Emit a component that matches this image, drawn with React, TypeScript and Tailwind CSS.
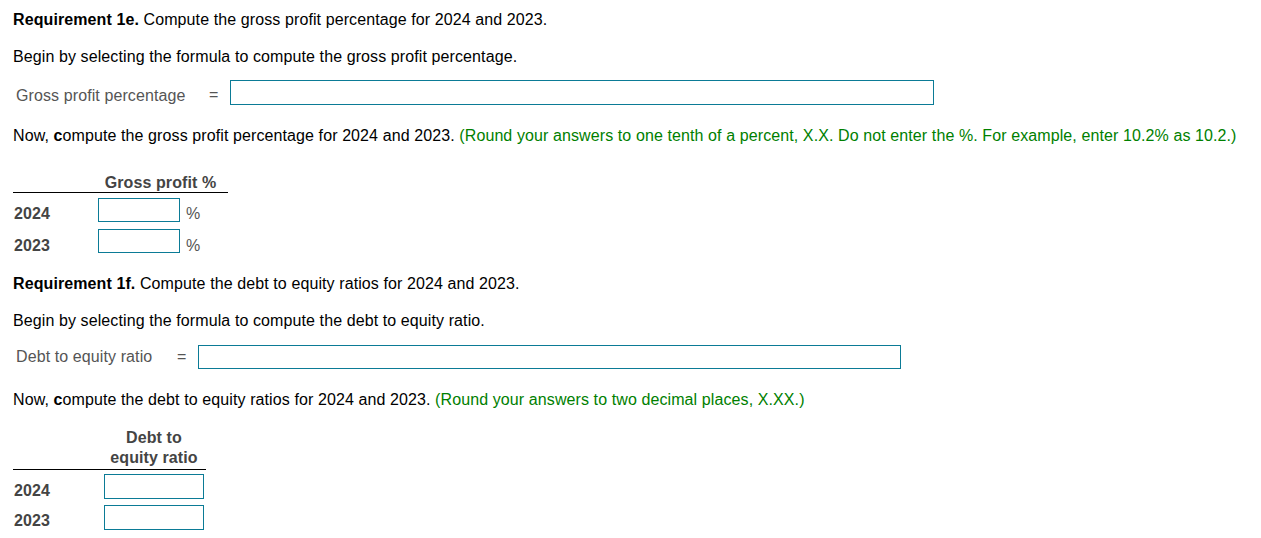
import React from "react";

const inputCls = "border border-[#0b7b96] bg-white box-border";

export default function App() {
  return (
    <div className="w-[1261px] h-[538px] bg-white text-black text-[16px] leading-[18px] tracking-[0.1px] overflow-hidden" style={{ fontFamily: '"Liberation Sans", Arial, sans-serif' }}>
      <div className="pl-[13px] pt-[11px]">
        <p className="h-[18px] whitespace-nowrap"><b>Requirement 1e.</b> Compute the gross profit percentage for 2024 and 2023.</p>
        <p className="mt-[19px] h-[18px] whitespace-nowrap">Begin by selecting the formula to compute the gross profit percentage.</p>
        <div className="mt-[14px] flex items-start h-[25px]">
          <span className="ml-[3px] mt-[7px] w-[193px] text-[#555] whitespace-nowrap">Gross profit percentage</span>
          <span className="mt-[6px] w-[21px] text-[#555]">=</span>
          <div className={`${inputCls} w-[704px] h-[25px]`} />
        </div>
        <p className="mt-[22px] h-[18px] whitespace-nowrap">
          Now, <b>c</b>ompute the gross profit percentage for 2024 and 2023.{" "}
          <span className="text-[#008000]">(Round your answers to one tenth of a percent, X.X. Do not enter the %. For example, enter 10.2% as 10.2.)</span>
        </p>

        <div className="mt-[29px] w-[215px]">
          <div className="flex border-b border-black h-[19px]">
            <div className="w-[85px]" />
            <div className="w-[125px] font-bold text-[#444] text-center whitespace-nowrap">Gross profit %</div>
          </div>
          <div className="flex items-start h-[30px]">
            <span className="w-[85px] mt-[12px] pl-[1px] font-bold text-[#444]">2024</span>
            <div className={`${inputCls} mt-[5px] w-[82px] h-[24px]`} />
            <span className="ml-[6px] mt-[12px] text-[#555]">%</span>
          </div>
          <div className="flex items-start h-[29px]">
            <span className="w-[85px] mt-[14px] pl-[1px] font-bold text-[#444]">2023</span>
            <div className={`${inputCls} mt-[6px] w-[82px] h-[24px]`} />
            <span className="ml-[6px] mt-[14px] text-[#555]">%</span>
          </div>
        </div>

        <p className="mt-[23px] h-[18px] whitespace-nowrap"><b>Requirement 1f.</b> Compute the debt to equity ratios for 2024 and 2023.</p>
        <p className="mt-[19px] h-[18px] whitespace-nowrap">Begin by selecting the formula to compute the debt to equity ratio.</p>
        <div className="mt-[15px] flex items-start h-[24px]">
          <span className="ml-[3px] mt-[3px] w-[161px] text-[#555] whitespace-nowrap">Debt to equity ratio</span>
          <span className="mt-[3px] w-[21px] text-[#555]">=</span>
          <div className={`${inputCls} w-[703px] h-[24px]`} />
        </div>
        <p className="mt-[22px] h-[18px] whitespace-nowrap">
          Now, <b>c</b>ompute the debt to equity ratios for 2024 and 2023.{" "}
          <span className="text-[#008000]">(Round your answers to two decimal places, X.XX.)</span>
        </p>

        <div className="mt-[19px] w-[193px]">
          <div className="flex border-b border-black pb-[1px]">
            <div className="w-[91px]" />
            <div className="w-[100px] font-bold text-[#444] text-center leading-[20px]">Debt to<br />equity ratio</div>
          </div>
          <div className="flex items-start h-[29px]">
            <span className="w-[91px] mt-[12px] pl-[1px] font-bold text-[#444]">2024</span>
            <div className={`${inputCls} mt-[4px] w-[100px] h-[25px]`} />
          </div>
          <div className="flex items-start h-[31px]">
            <span className="w-[91px] mt-[13px] pl-[1px] font-bold text-[#444]">2023</span>
            <div className={`${inputCls} mt-[6px] w-[100px] h-[25px]`} />
          </div>
        </div>
      </div>
    </div>
  );
}
